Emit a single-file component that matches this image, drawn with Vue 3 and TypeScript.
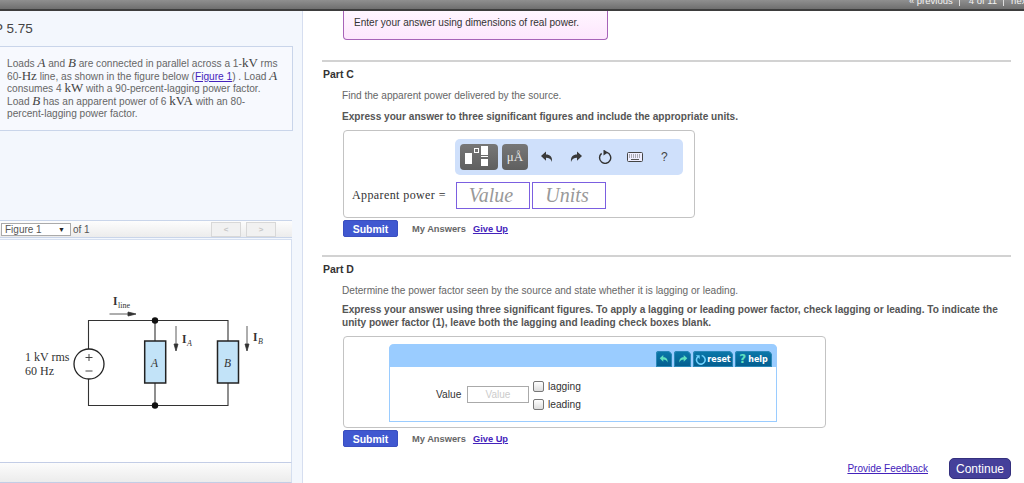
<script setup lang="ts">
const parts: string[] = ['Find the apparent power delivered by the source.']
const headline = parts[0]
</script>

<template>
  <div class="page">
    <header class="topbar">
      <div class="pager"><span>« previous</span><i></i><span>4 of 11</span><i></i><span>next »</span></div>
    </header>
    <div class="main">
      <aside class="left">
        <h1 class="title">P 5.75</h1>
        <div class="statement">
          Loads <em class="m">A</em> and <em class="m">B</em> are connected in parallel across a 1-<span class="r">kV</span> rms<br />
          60-<span class="r">Hz</span> line, as shown in the figure below (<a class="link">Figure 1</a>) . Load <em class="m">A</em><br />
          consumes 4 <span class="r">kW</span> with a 90-percent-lagging power factor.<br />
          Load <em class="m">B</em> has an apparent power of 6 <span class="r">kVA</span> with an 80-<br />
          percent-lagging power factor.
        </div>
        <div class="figbar">
          <div class="figselect"><span>Figure 1</span><b>▼</b></div>
          <span class="of">of 1</span>
          <div class="fignav"><button>&lt;</button><button>&gt;</button></div>
        </div>
        <div class="figure">
          <svg class="circuit" width="291" height="222" viewBox="0 -1 291 222">
            <g fill="none" stroke="#333" stroke-width="1.1">
              <path d="M88.500 108V79.500H228V100" />
              <path d="M88.500 138V164.500H228V142" />
              <path d="M155 79.500V100M155 142V164" />
              <circle cx="89" cy="123" r="15" fill="#fff" stroke="#222" stroke-width="1.300" />
            </g>
            <rect x="144.700" y="100" width="21" height="42" fill="#c2e3f8" stroke="#222" stroke-width="1.500" />
            <rect x="217.500" y="100" width="21" height="42" fill="#c2e3f8" stroke="#222" stroke-width="1.500" />
            <circle cx="155" cy="79.500" r="3.200" fill="#111" />
            <circle cx="155" cy="164.500" r="3.200" fill="#111" />
            <path d="M109.500 73H134M128 71 136 73 128 75Z" fill="#333" stroke="#333" stroke-width=".8" />
            <path d="M176 85V106M174 103 176 110 178 103Z" fill="#333" stroke="#333" stroke-width=".8" />
            <path d="M247 85V106M245 103 247 110 249 103Z" fill="#333" stroke="#333" stroke-width=".8" />
            <path d="M89 113V120M85.500 116.500H92.500M85.500 130H92.500" stroke="#333" stroke-width=".9" fill="none" />
            <g class="ct">
              <text x="25" y="120">1 kV rms</text>
              <text x="25" y="134">60 Hz</text>
              <text x="113" y="64" class="bi">I</text>
              <text x="118" y="67" class="sub">line</text>
              <text x="182" y="102" class="bi">I</text>
              <text x="187" y="105" class="sub it">A</text>
              <text x="253" y="100" class="bi">I</text>
              <text x="258" y="103" class="sub it">B</text>
              <text x="151" y="126" class="it">A</text>
              <text x="224" y="126" class="it">B</text>
            </g>
          </svg>
        </div>
        <div class="figfoot"></div>
      </aside>

      <section class="right">
        <div class="hint">Enter your answer using dimensions of real power.</div>

        <div class="part part-c">
          <h2>Part C</h2>
          <p class="q">{{ headline }}</p>
          <p class="ins">Express your answer to three significant figures and include the appropriate units.</p>
          <div class="answer c">
            <div class="tools">
              <div class="tbtn big">
                <svg width="38" height="26" viewBox="0 0 38 26">
                  <rect x="5" y="9" width="7" height="11" fill="#fff" />
                  <rect x="14.500" y="4.500" width="4" height="4" fill="none" stroke="#fff" stroke-width="1" />
                  <rect x="21" y="2" width="7" height="9" fill="#fff" />
                  <rect x="21" y="12" width="7" height="1" fill="#fff" />
                  <rect x="21" y="15" width="7" height="7" fill="#fff" />
                </svg>
              </div>
              <div class="tbtn unit">μÅ</div>
              <div class="glyphs">
                <svg width="14" height="14" viewBox="0 0 14 14"><path d="M1 6 6 1.500V4.500C10 4.500 12.500 6.500 12 12 11 9 9 7.800 6 7.800V10.800Z" fill="#3a3a3a" /></svg>
                <svg width="14" height="14" viewBox="0 0 14 14"><path d="M13 6 8 1.500V4.500C4 4.500 1.500 6.500 2 12 3 9 5 7.800 8 7.800V10.800Z" fill="#3a3a3a" /></svg>
                <svg width="14" height="14" viewBox="0 0 14 14"><path d="M8.800 2.400A5.600 5.600 0 1 1 3.600 3.400" fill="none" stroke="#333" stroke-width="1.400" /><path d="M5.500 -.5 10 2.500 5.500 5.500Z" fill="#333" /></svg>
                <svg width="16" height="10" viewBox="0 0 16 10"><rect x=".5" y=".5" width="15" height="9" rx="1" fill="#eef" stroke="#444" /><path d="M2 3H14M2 5H14" stroke="#666" stroke-dasharray="1 1" /><path d="M4 7.500H12" stroke="#555" /></svg>
                <span class="qm">?</span>
              </div>
            </div>
            <div class="eq">
              <span class="eq-label">Apparent power =</span>
              <span class="mq">Value</span>
              <span class="mq">Units</span>
            </div>
          </div>
          <div class="actions">
            <button class="submit">Submit</button><span class="my">My Answers</span><a class="link give">Give Up</a>
          </div>
        </div>

        <div class="part part-d">
          <h2>Part D</h2>
          <p class="q">Determine the power factor seen by the source and state whether it is lagging or leading.</p>
          <p class="ins two">Express your answer using three significant figures. To apply a lagging or leading power factor, check lagging or leading. To indicate the unity power factor (1), leave both the lagging and leading check boxes blank.</p>
          <div class="answer d">
            <div class="applet">
              <div class="ahead">
                <span class="tab">
                  <svg width="10" height="10" viewBox="0 0 14 14"><path d="M1 6 6 1.500V4.500C10 4.500 12.500 6.500 12 12 11 9 9 7.800 6 7.800V10.800Z" fill="#5fe0c0" /></svg>
                </span>
                <span class="tab r2">
                  <svg width="10" height="10" viewBox="0 0 14 14"><path d="M13 6 8 1.500V4.500C4 4.500 1.500 6.500 2 12 3 9 5 7.800 8 7.800V10.800Z" fill="#5fe0c0" /></svg>
                </span>
                <span class="tab wide">
                  <svg width="11" height="11" viewBox="0 0 14 14"><path d="M8.500 2A5.500 5.500 0 1 1 3.500 3.500" fill="none" stroke="#6fd3ff" stroke-width="2" /><path d="M1 1.500H6V6.500Z" fill="#6fd3ff" /></svg>
                  reset
                </span>
                <span class="tab help"><b>?</b> help</span>
              </div>
              <div class="abody">
                <span class="vlabel">Value</span>
                <span class="vbox">Value</span>
                <div class="checks">
                  <label><i class="cb"></i>lagging</label>
                  <label><i class="cb"></i>leading</label>
                </div>
              </div>
            </div>
          </div>
          <div class="actions">
            <button class="submit">Submit</button><span class="my">My Answers</span><a class="link give">Give Up</a>
          </div>
        </div>

        <div class="foot">
          <a class="link fb">Provide Feedback</a>
          <button class="cont">Continue</button>
        </div>
      </section>
    </div>
  </div>
</template>

<style>
html, body { margin: 0; background: #fff; overflow: hidden; }
</style>

<style scoped>
.page { width: 1024px; height: 483px; overflow: hidden; font-family: "Liberation Sans", Arial, sans-serif; color: #444; display: flex; flex-direction: column; }
.topbar { height: 9px; flex: none; background: linear-gradient(#8f8f8f, #6f6f6f); border-bottom: 2px solid #3d3d3d; overflow: hidden; display: flex; justify-content: flex-end; }
.pager { display: flex; color: #f2f2f2; font-size: 9.500px; line-height: 10px; margin-top: -4px; margin-right: -13px; height: 10px; white-space: nowrap; }
.pager span { padding: 0 6px 0 9px; }
.pager span:last-child { padding-right: 0; padding-left: 7px; }
.pager i { width: 1px; height: 10px; background: #ddd; }
.main { flex: 1; display: flex; min-height: 0; }

.left { width: 302px; flex: none; background: #f3f7fd; border-right: 1px solid #d6def0; overflow: hidden; }
.title { margin: 10px 0 0 -6px; font-size: 13.500px; line-height: 16px; font-weight: 400; color: #444; }
.statement { margin: 9px 0 0 -1px; width: 285px; height: 72px; padding: 11px 0 0 7px; background: #f7f9fe; border: 1px solid #c9d5ea; font-size: 10.150px; line-height: 12.600px; color: #666; white-space: nowrap; }
.m { font-family: "Liberation Serif", serif; font-size: 13px; line-height: 0; color: #444; }
.r { font-family: "Liberation Serif", serif; font-size: 13px; line-height: 0; color: #444; }
.link { color: #4422bb; text-decoration: underline; }

.figbar { margin-top: 89px; width: 292px; height: 16px; display: flex; align-items: center; background: linear-gradient(#fdfdfd, #ececec); border-top: 1px solid #c9d5ea; border-bottom: 1px solid #c9d5ea; font-size: 10px; color: #555; }
.figselect { width: 70px; height: 13px; margin-left: 1px; background: #fff; border: 1px solid #aaa; display: flex; justify-content: space-between; align-items: center; padding: 0 5px 0 3px; box-sizing: border-box; }
.figselect b { font-size: 7px; color: #222; }
.of { margin-left: 2px; }
.fignav { margin-left: auto; margin-right: 16px; display: flex; gap: 5px; }
.fignav button { width: 30px; height: 15px; padding: 0; font: 700 8px "Liberation Sans", sans-serif; color: #c6c6c6; background: #f1f1f1; border: 1px solid #d8d8d8; }
.figure { margin-top: 1px; width: 291px; height: 222px; background: #fff; border-top: 1px solid #d5dff0; border-right: 1px solid #d5dff0; }
.circuit { display: block; }
.ct text { font-family: "Liberation Serif", serif; font-size: 12px; fill: #333; }
.ct text.bi { font-weight: 700; font-size: 11.500px; }
.ct text.sub { font-size: 8px; }
.ct text.it { font-style: italic; font-size: 11.500px; }
.ct text.sub.it { font-size: 8px; }
.figfoot { width: 291px; height: 19px; background: linear-gradient(#fcfcfc, #ececec); border-top: 1px solid #c3cde6; border-bottom: 1px solid #c3cde6; border-right: 1px solid #d5dff0; }

.right { flex: 1; padding-left: 19px; min-width: 0; position: relative; }
.hint { margin-left: 21px; width: 265px; height: 29px; box-sizing: border-box; padding: 6px 10px; font-size: 10.050px; color: #333; line-height: 12px; background: linear-gradient(#fff6ff, #fde6fd); border: 1px solid #a763b8; border-top: none; border-radius: 0 0 4px 4px; white-space: nowrap; }
.part { width: 689px; border-top: 2px solid #d2d2d2; }
.part-c { margin-top: 20px; }
.part-d { margin-top: 18px; }
h2 { margin: 6px 0 0 1px; font-size: 10.500px; line-height: 13px; font-weight: 700; color: #333; }
.q { margin: 8px 0 0 20px; font-size: 10.100px; line-height: 13px; color: #666; white-space: nowrap; }
.ins { margin: 8px 0 0 20px; font-size: 10.100px; line-height: 13px; font-weight: 700; color: #555; white-space: nowrap; }
.part-d .q { margin-top: 8px; }
.part-d .ins { margin-top: 6px; }
.ins.two { white-space: normal; width: 660px; }
.answer { margin: 7px 0 0 21px; background: #fff; border: 1px solid #c3c3c3; border-radius: 4px; box-sizing: border-box; }
.answer.c { width: 352px; height: 88px; padding: 8px 11px 0 8px; }
.tools { margin-left: 103px; width: 228px; height: 36px; box-sizing: border-box; background: #cfe0fb; border-radius: 5px; padding: 5px; display: flex; gap: 4px; }
.tbtn { height: 26px; background: linear-gradient(#777, #5f5f5f); border-radius: 4px; display: flex; align-items: center; justify-content: center; color: #fff; }
.tbtn.big { width: 38px; }
.tbtn.unit { width: 26px; font: 13px "Liberation Serif", serif; color: #e8e8e8; }
.glyphs { flex: 1; display: flex; align-items: center; gap: 15px; padding-left: 8px; }
.qm { font-size: 12px; color: #444; margin-left: 3px; }
.eq { display: flex; align-items: center; margin-top: 7px; gap: 2px; }
.eq-label { font: 12px "Liberation Serif", serif; color: #333; width: 101px; letter-spacing: .4px; white-space: nowrap; margin-right: 1px; }
.mq { width: 74px; height: 27px; box-sizing: border-box; border: 1px solid #7b5fe0; font: italic 20px/25px "Liberation Serif", serif; color: #999; text-align: center; padding-right: 4px; }
.actions { margin: 2px 0 0 21px; display: flex; align-items: center; font-size: 9.300px; font-weight: 700; height: 17px; }
.submit { width: 55px; height: 17px; padding: 0; background: #4058d0; border: 1px solid #3a4fc0; border-radius: 2px; color: #fff; font: 700 10.500px "Liberation Sans", sans-serif; box-sizing: border-box; }
.my { margin-left: 14px; color: #666; }
.give { margin-left: 7px; }

.answer.d { width: 483px; height: 92px; padding: 7px 48px 0 45px; margin-top: 7px; }
.applet { width: 388px; height: 78px; box-sizing: border-box; border: 1px solid #9accff; border-top: none; border-radius: 5px 5px 0 0; }
.ahead { height: 23px; margin: 0 -1px; background: #9accff; border-radius: 5px 5px 0 0; display: flex; justify-content: flex-end; align-items: flex-end; gap: 2px; padding-right: 5px; }
.tab { height: 16px; width: 16px; background: linear-gradient(#0a78aa, #045d8e); border-radius: 3px 5px 0 0; box-shadow: inset 0 0 0 1px #2a88b8; display: flex; align-items: center; justify-content: center; color: #fff; font: 700 8px "DejaVu Sans", sans-serif; }
.tab.r2 { width: 17px; }
.tab.wide { width: 40px; gap: 1px; }
.tab.help { width: 37px; gap: 2px; }
.tab.help b { font-size: 12px; color: #5fe0c0; }
.abody { position: relative; display: flex; align-items: center; height: 55px; padding-left: 46px; font-size: 10.200px; color: #333; }
.vlabel { width: 31px; }
.vbox { width: 62px; height: 17px; box-sizing: border-box; border: 1px solid #aaa; color: #ccc; text-align: center; line-height: 15px; font-size: 10px; }
.checks { margin-left: 4px; display: flex; flex-direction: column; gap: 5px; margin-top: 1px; }
.checks label { display: flex; align-items: center; gap: 4px; height: 13px; font-size: 10.200px; }
.cb { width: 11px; height: 11px; box-sizing: border-box; border: 1px solid #777; border-radius: 2px; background: linear-gradient(#fff, #ddd); }

.foot { position: absolute; left: 0; right: 0; top: 447px; display: flex; align-items: center; justify-content: flex-end; padding-right: 13px; }
.fb { font-size: 10px; margin-right: 21px; }
.cont { width: 62px; height: 21px; padding: 0; background: #45409a; border: 1px solid #34307e; border-radius: 5px; color: #fff; font: 12px "Liberation Sans", sans-serif; }
</style>
